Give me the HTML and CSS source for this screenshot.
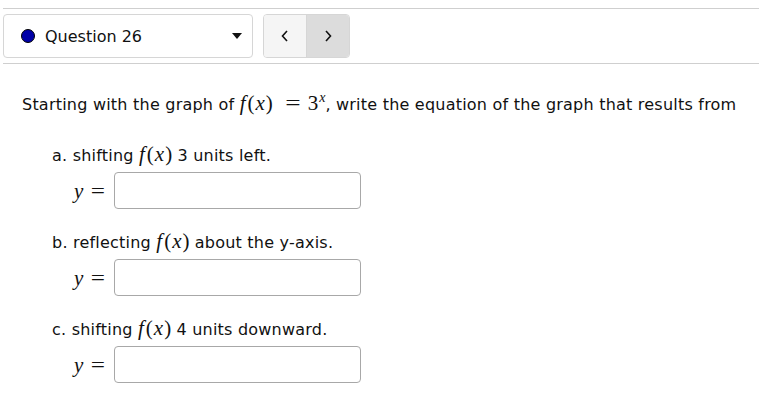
FILE: index.html
```html
<!DOCTYPE html>
<html>
<head>
<meta charset="utf-8">
<link rel="stylesheet" href="styles.css">
</head>
<body>
<div class="header">
  <div class="bar">
    <div class="select">
      <span class="dot"></span>
      <span class="qlabel">Question 26</span>
      <span class="caret"></span>
    </div>
    <div class="nav">
      <div class="btn prev"><svg width="10" height="12" viewBox="0 0 10 12"><path d="M7 1 L2.5 6 L7 11" fill="none" stroke="#111" stroke-width="1.6"/></svg></div>
      <div class="btn next"><svg width="10" height="12" viewBox="0 0 10 12"><path d="M3 1 L7.5 6 L3 11" fill="none" stroke="#111" stroke-width="1.6"/></svg></div>
    </div>
  </div>
</div>
<div class="content">
  <p class="stem">Starting with the graph of <span class="m"><i class="f">f</i>(<i class="x">x</i>)</span><span class="m eq">=</span><span class="m">3<sup><i>x</i></sup></span>, write the equation of the graph that results from</p>
  <div class="part first">
    <div class="plabel">a. shifting <span class="m"><i class="f">f</i>(<i class="x">x</i>)</span> 3 units left.</div>
    <div class="ans"><span class="m yv"><i>y</i></span><span class="m eq2">=</span><span class="box"></span></div>
  </div>
  <div class="part">
    <div class="plabel">b. reflecting <span class="m"><i class="f">f</i>(<i class="x">x</i>)</span> about the y-axis.</div>
    <div class="ans"><span class="m yv"><i>y</i></span><span class="m eq2">=</span><span class="box"></span></div>
  </div>
  <div class="part">
    <div class="plabel">c. shifting <span class="m"><i class="f">f</i>(<i class="x">x</i>)</span> 4 units downward.</div>
    <div class="ans"><span class="m yv"><i>y</i></span><span class="m eq2">=</span><span class="box"></span></div>
  </div>
</div>
</body>
</html>
```
FILE: styles.css
```css
html, body { margin: 0; padding: 0; background: #fff; }
body { font-family: "DejaVu Sans", Verdana, sans-serif; color: #111; font-size: 16px; letter-spacing: 0.22px; }
.header { margin: 8px 0 0 3px; border-top: 1px solid #cfcfcf; border-bottom: 1px solid #cfcfcf; padding: 5px 0 5px 0; }
.bar { display: flex; align-items: center; gap: 10px; }
.select { height: 42px; border: 1px solid #d6d6d6; border-radius: 4px; display: flex; align-items: center; padding: 0 0 0 17px; width: 231px; }
.dot { width: 12px; height: 12px; border-radius: 50%; background: #0000a8; border: 1px solid #000; }
.qlabel { margin-left: 10px; font-size: 16px; flex: 1; letter-spacing: 0; }
.caret { width: 0; height: 0; border-left: 5px solid transparent; border-right: 5px solid transparent; border-top: 6px solid #111; margin-right: 10px; }
.nav { display: flex; height: 44px; border: 1px solid #d6d6d6; border-radius: 4px; overflow: hidden; box-sizing: border-box; }
.btn { width: 42px; display: flex; align-items: center; justify-content: center; }
.prev { background: #f5f5f5; border-right: 1px solid #d6d6d6; }
.next { background: #dcdcdc; }
.content { padding: 0 0 0 22px; }
.stem { margin: 30px 0 0 0; line-height: 22px; }
.m { font-family: "Liberation Serif", "Times New Roman", serif; font-size: 21px; letter-spacing: 0; line-height: 0; }
.m i { font-style: italic; }
.m .f { margin: 0 2px 0 0; }
.m .x { margin: 0 1px 0 1px; }
.eq { margin: 0 9px 0 14px; display: inline-block; transform: scaleX(1.3); }
.m sup { font-size: 14px; margin-left: 1px; line-height: 0; }
.part { margin-left: 30px; }
.plabel { margin-top: 22px; line-height: 24px; }
.first .plabel { margin-top: 28px; }
.ans { display: flex; align-items: center; margin-top: 4px; padding-left: 22px; }
.yv { width: 14px; }
.eq2 { margin: 0 10px 0 4px; transform: scaleX(1.2); }
.box { width: 245px; height: 35px; border: 1px solid #a8a8a8; border-radius: 4px; }
```
